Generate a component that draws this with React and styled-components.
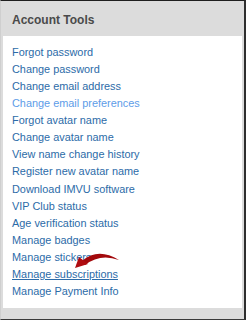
import React from 'react'
import styled, { createGlobalStyle } from 'styled-components'

const GlobalStyle = createGlobalStyle`
  html, body {
    margin: 0;
    padding: 0;
    background: #dcdcdc;
  }
`

const Frame = styled.div`
  width: 246px;
  height: 320px;
  box-sizing: border-box;
  background: #dcdcdc;
  border-top: 1px solid #1e1e1e;
  border-right: 2px solid #2e2e2e;
  border-bottom: 1px solid #3a3a3a;
  border-left: 1px solid #cfcfcf;
  padding: 0 2px 0 2px;
  font-family: 'Liberation Sans', Arial, sans-serif;
`

const Header = styled.h2`
  margin: 0;
  height: 35px;
  box-sizing: border-box;
  display: flex;
  align-items: center;
  padding: 3px 0 0 9px;
  font-size: 12px;
  font-weight: bold;
  color: #4a4a4a;
`

const Panel = styled.ul`
  position: relative;
  list-style: none;
  margin: 0;
  background: #fff;
  height: 272px;
  box-sizing: border-box;
  padding: 7.5px 0 0 9px;
`

const Item = styled.li`
  font-size: 10.9px;
  line-height: 17.15px;
  height: 17.15px;
  white-space: nowrap;
`

const Link = styled.a`
  color: ${p => (p.$light ? '#5d9ce8' : '#2c6ba8')};
  text-decoration: ${p => (p.$underline ? 'underline' : 'none')};
  cursor: pointer;
`

const Arrow = styled.svg`
  position: absolute;
  left: 67px;
  top: 212px;
`

const links = [
  'Forgot password',
  'Change password',
  'Change email address',
  'Change email preferences',
  'Forgot avatar name',
  'Change avatar name',
  'View name change history',
  'Register new avatar name',
  'Download IMVU software',
  'VIP Club status',
  'Age verification status',
  'Manage badges',
  'Manage stickers',
  'Manage subscriptions',
  'Manage Payment Info',
]

export default function App() {
  return (
    <>
      <GlobalStyle />
      <Frame>
        <Header>Account Tools</Header>
        <Panel>
          {links.map(label => (
            <Item key={label}>
              <Link
                $light={label === 'Change email preferences'}
                $underline={label === 'Manage subscriptions'}
              >
                {label}
              </Link>
            </Item>
          ))}
          <Arrow width="54" height="26" viewBox="0 0 54 26">
            <path d="M12 13 Q28 -1 49 12 Q30 5 15 17 Z" fill="#a3090c" />
            <path d="M5 20 L9 9 L18 16 Z" fill="#b00c10" />
          </Arrow>
        </Panel>
      </Frame>
    </>
  )
}
